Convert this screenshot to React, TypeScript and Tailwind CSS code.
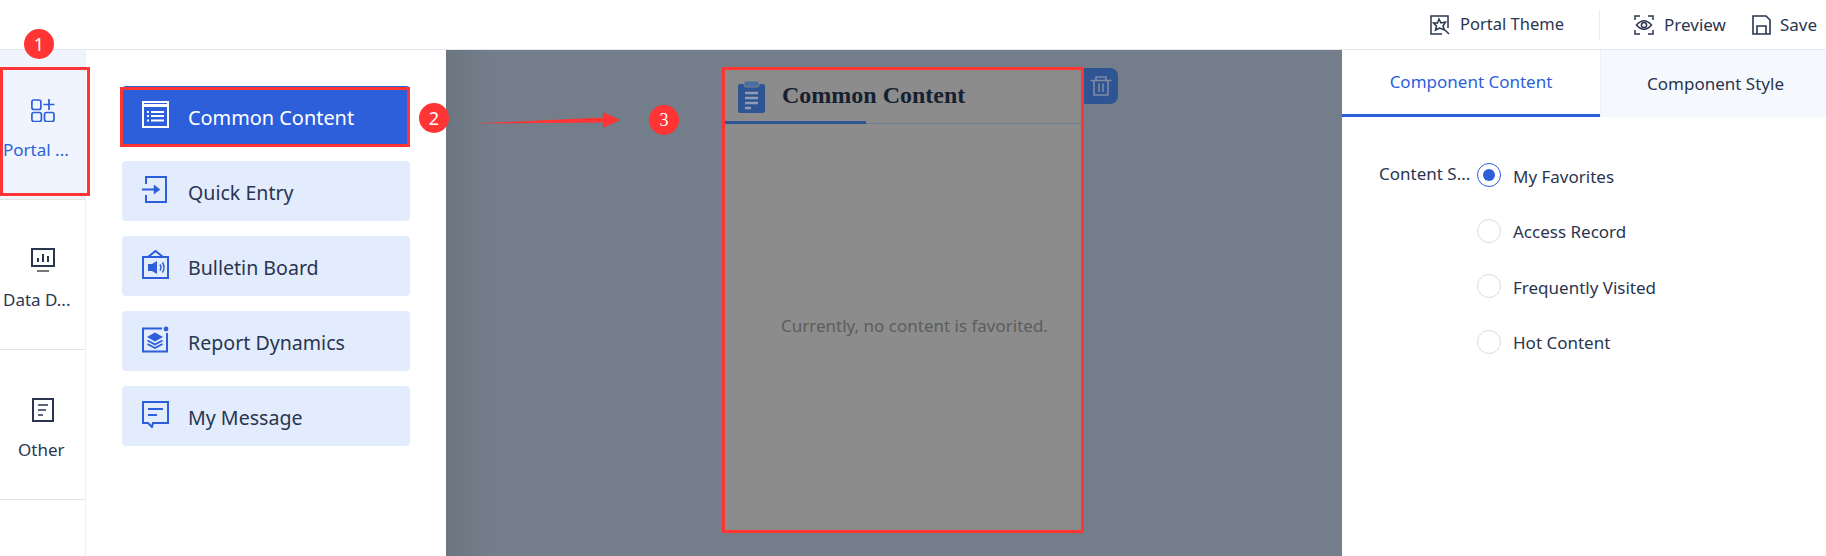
import React from "react";

const BLUE = "#2d5fdb";
const DARK = "#2a3550";

function GridPlus() {
  return (
    <svg width="24" height="24" viewBox="0 0 24 24" fill="none" stroke={BLUE} strokeWidth="1.7">
      <rect x="0.9" y="2" width="9" height="9.5" rx="2" />
      <rect x="0.9" y="14.5" width="9.5" height="9" rx="2" />
      <rect x="13.5" y="14.5" width="9.5" height="9" rx="2" />
      <path d="M12.5 6.5H23.5M18 1V12" />
    </svg>
  );
}
function Monitor() {
  return (
    <svg width="24" height="24" viewBox="0 0 24 24" fill="none" stroke={DARK} strokeWidth="2">
      <rect x="1" y="1" width="22" height="17" />
      <path d="M7 14V10M12 14V6M17 14V8" />
      <path d="M6 23H18" strokeWidth="1.6" stroke="#555" />
    </svg>
  );
}
function DocLines() {
  return (
    <svg width="24" height="24" viewBox="0 0 24 24" fill="none" stroke={DARK} strokeWidth="2">
      <rect x="2" y="1" width="20" height="22" />
      <path d="M7 7H17M7 12H15M7 17H12" strokeWidth="1.7" />
    </svg>
  );
}
function ListBox() {
  return (
    <svg width="27" height="27" viewBox="0 0 27 27" fill="none" stroke="#fff">
      <rect x="1" y="1" width="25" height="25" strokeWidth="2" />
      <path d="M1 4.5H26" strokeWidth="3" />
      <path d="M9 11H22M9 15H22M9 19.5H22M5 11H7M5 15H7M5 19.5H7" strokeWidth="2" />
    </svg>
  );
}
function EntryIcon() {
  return (
    <svg width="27" height="27" viewBox="0 0 27 27" fill="none" stroke={BLUE} strokeWidth="2">
      <path d="M4 8V1H24V26H4V19" />
      <path d="M0 13.5H15" />
      <path d="M12 9L18 13.5L12 18Z" fill={BLUE} strokeWidth="0.5" />
    </svg>
  );
}
function Speaker() {
  return (
    <svg width="27" height="29" viewBox="0 0 27 29" fill="none" stroke={BLUE} strokeWidth="2">
      <rect x="1" y="7" width="25" height="21" />
      <path d="M6 7L13.5 1L21 7" />
      <path d="M6 14H10L15 11V24L10 21H6Z" fill={BLUE} stroke="none" />
      <path d="M18 14.5Q20 17.5 18 20.5" strokeWidth="1.5" />
      <path d="M20.5 12.5Q23.5 17.5 20.5 22.5" strokeWidth="1.5" />
    </svg>
  );
}
function Layers() {
  return (
    <svg width="27" height="27" viewBox="0 0 27 27" fill="none" stroke={BLUE} strokeWidth="2">
      <path d="M20 2.5H1V25.5H25V7" />
      <circle cx="24" cy="3" r="2.4" fill={BLUE} stroke="none" />
      <path d="M13 6.5L21 11L13 15.5L5 11Z" fill={BLUE} stroke="none" />
      <path d="M5.5 14.5L13 18.5L20.5 14.5M5.5 18L13 22L20.5 18" strokeWidth="1.8" />
    </svg>
  );
}
function Message() {
  return (
    <svg width="27" height="27" viewBox="0 0 27 27" fill="none" stroke={BLUE} strokeWidth="2">
      <path d="M1 1H26V22H11L10 26L6 22H1Z" />
      <path d="M6 8H21M6 14H15" />
    </svg>
  );
}
function Clipboard() {
  return (
    <svg width="27" height="32" viewBox="0 0 27 32" fill="none">
      <path d="M0 5Q0 3 2 3H25Q27 3 27 5V30Q27 32 25 32H2Q0 32 0 30Z" fill="#2f5494" />
      <rect x="6" y="0" width="15" height="6" rx="2" fill="#4a6da5" stroke="#8c8c8c" strokeWidth="0.8" />
      <path d="M7 12H20M7 17H20M7 22H20M7 27H13" stroke="#8f9cb4" strokeWidth="2.4" />
    </svg>
  );
}
function Trash() {
  return (
    <svg width="22" height="20" viewBox="0 0 22 20" fill="none" stroke="#7f8aa3" strokeWidth="1.6">
      <path d="M0.5 4.5H21.5M6 4.5V1H16V4.5M4 4.5V19H18V4.5M9 7.5V16M13 7.5V16" />
    </svg>
  );
}
function ThemeIcon() {
  return (
    <svg width="20" height="20" viewBox="0 0 20 20" fill="none" stroke={DARK} strokeWidth="1.5">
      <path d="M18 13V1H1V19H12" />
      <path d="M9 4L11 8L15.5 7L13 11L14.5 15L9.5 13L5.5 15L6.5 11L3.5 8L7.5 8Z" />
      <path d="M15 15L19 19" />
    </svg>
  );
}
function EyeIcon() {
  return (
    <svg width="20" height="20" viewBox="0 0 20 20" fill="none" stroke={DARK} strokeWidth="1.5">
      <path d="M1 5V1H6M14 1H19V5M19 15V19H14M6 19H1V15" />
      <path d="M2.5 10Q10 1.5 17.5 10Q10 18.5 2.5 10Z" />
      <circle cx="10" cy="10" r="2.6" />
    </svg>
  );
}
function SaveIcon() {
  return (
    <svg width="19" height="20" viewBox="0 0 19 20" fill="none" stroke={DARK} strokeWidth="1.6">
      <path d="M1 1H14L18 5V19H1Z" />
      <path d="M5 19V11H14V19" />
    </svg>
  );
}

function Marker({ className, children }: { className: string; children: React.ReactNode }) {
  return (
    <div
      className={`absolute w-[30px] h-[30px] rounded-full bg-[#ff3535] text-white flex items-center justify-center text-[18px] ${className}`}
    >
      {children}
    </div>
  );
}

const rail = [
  { icon: <GridPlus />, label: "Portal ...", active: true, pl: "pl-[3px]" },
  { icon: <Monitor />, label: "Data D...", active: false, pl: "pl-[3px]" },
  { icon: <DocLines />, label: "Other", active: false, pl: "pl-[18px]" },
];

const items = [
  { icon: <ListBox />, label: "Common Content", active: true },
  { icon: <EntryIcon />, label: "Quick Entry", active: false },
  { icon: <Speaker />, label: "Bulletin Board", active: false },
  { icon: <Layers />, label: "Report Dynamics", active: false },
  { icon: <Message />, label: "My Message", active: false },
];

const radios = ["My Favorites", "Access Record", "Frequently Visited", "Hot Content"];

export default function App() {
  return (
    <div
      className="relative w-[1826px] h-[556px] overflow-hidden bg-white flex flex-col text-[#2a3550]"
      style={{ fontFamily: '"Noto Sans", sans-serif' }}
    >
      <header className="h-[50px] shrink-0 border-b border-[#e5e8ee] flex items-center justify-end pr-[9px] text-[17px]">
        <div className="flex items-center gap-[10px]">
          <ThemeIcon />
          <span className="text-[16.5px]">Portal Theme</span>
        </div>
        <div className="w-px h-[30px] bg-[#e8eaf0] ml-[35px] mr-[34px]" />
        <div className="flex items-center gap-[10px]">
          <EyeIcon />
          <span>Preview</span>
        </div>
        <div className="flex items-center gap-[9px] ml-[26px]">
          <SaveIcon />
          <span>Save</span>
        </div>
      </header>

      <div className="flex flex-1 min-h-0">
        <nav className="w-[86px] shrink-0 border-r border-[#eef0f5]">
          {rail.map((r) => (
            <div
              key={r.label}
              className={`h-[150px] pt-[48px] border-b border-[#e2e2e2] ${r.active ? "bg-[#f0f4fe] text-[#2d5fdb]" : ""}`}
            >
              <div className="flex justify-center">{r.icon}</div>
              <div className={`mt-[16px] leading-[24px] text-[17px] ${r.pl}`}>{r.label}</div>
            </div>
          ))}
        </nav>

        <aside className="w-[360px] shrink-0 pl-[36px] pt-[36px] flex flex-col gap-[15px]">
          {items.map((it) => (
            <div
              key={it.label}
              className={`w-[288px] h-[60px] shrink-0 rounded-[4px] flex items-center ${
                it.active ? "bg-[#2d5fdb] text-white text-[19.9px]" : "bg-[#e3ecfd] text-[19.6px]"
              }`}
            >
              <div className="w-[66px] pl-[20px] shrink-0 flex items-center -mt-[4px]">{it.icon}</div>
              <span className="mt-[3px]">{it.label}</span>
            </div>
          ))}
        </aside>

        <main className="w-[896px] shrink-0 bg-gradient-to-r from-[#6c7681] to-[#737e8a] to-[5%] pl-[276px] pt-[17px] flex items-start">
          <section className="w-[362px] h-[466px] border-[3px] border-[#ff3535] bg-[#8c8c8c] flex flex-col">
            <div className="relative h-[54px] shrink-0 border-b border-[#6e7c92] flex items-center pl-[13px]">
              <Clipboard />
              <span
                className="ml-[17px] -mt-[4px] text-[24px] font-bold text-[#17202f]"
                style={{ fontFamily: '"Liberation Serif", serif' }}
              >
                Common Content
              </span>
              <div className="absolute left-0 bottom-[-1px] w-[141px] h-[3px] bg-[#2f5494]" />
            </div>
            <div className="flex-1 flex items-center justify-center pl-[23px] pb-[2px] text-[17px] text-[#5c5c5c]">
              Currently, no content is favorited.
            </div>
          </section>
          <div className="w-[34px] h-[36px] mt-[1px] bg-[#2f5494] rounded-r-[8px] flex items-center justify-center">
            <Trash />
          </div>
        </main>

        <aside className="flex-1 min-w-0">
          <div className="flex h-[67px] text-[17px]">
            <div className="w-[258px] border-b-[3px] border-[#2d5fdb] text-[#2d5fdb] flex items-center justify-center">
              Component Content
            </div>
            <div className="flex-1 bg-[#f5f8fc] flex items-center justify-center pl-[4px] border-l border-[#eef0f5]">
              Component Style
            </div>
          </div>
          <div className="flex pl-[37px] pt-[46px] text-[17px]">
            <div className="w-[98px] leading-[22px]">Content S...</div>
            <div className="flex flex-col">
              {radios.map((r, i) => (
                <div key={r} className="h-[55.5px] flex items-start gap-[12px]">
                  <div
                    className={`w-[24px] h-[24px] rounded-full border flex items-center justify-center ${
                      i === 0 ? "border-[#2d5fdb]" : "border-[#dcdcdc]"
                    }`}
                  >
                    {i === 0 && <div className="w-[12px] h-[12px] rounded-full bg-[#2d5fdb]" />}
                  </div>
                  <span className="leading-[24px] mt-[1.5px]">{r}</span>
                </div>
              ))}
            </div>
          </div>
        </aside>
      </div>

      {/* annotations */}
      <div className="absolute left-0 top-[67px] w-[90px] h-[129px] border-[3px] border-[#ff3535]" />
      <div className="absolute left-[120px] top-[87px] w-[290px] h-[60px] border-[3px] border-[#ff3535]" />
      <Marker className="left-[24px] top-[29px]">1</Marker>
      <Marker className="left-[419px] top-[103px]">2</Marker>
      <Marker className="left-[649px] top-[105px]">
        <span style={{ fontFamily: '"Liberation Serif", serif' }}>3</span>
      </Marker>
      <svg className="absolute left-[470px] top-[108px]" width="155" height="24" viewBox="0 0 155 24">
        <path d="M3 15.5L133 9.5V4L150 12L133 20V14.5Z" fill="#ff3535" />
      </svg>
    </div>
  );
}
